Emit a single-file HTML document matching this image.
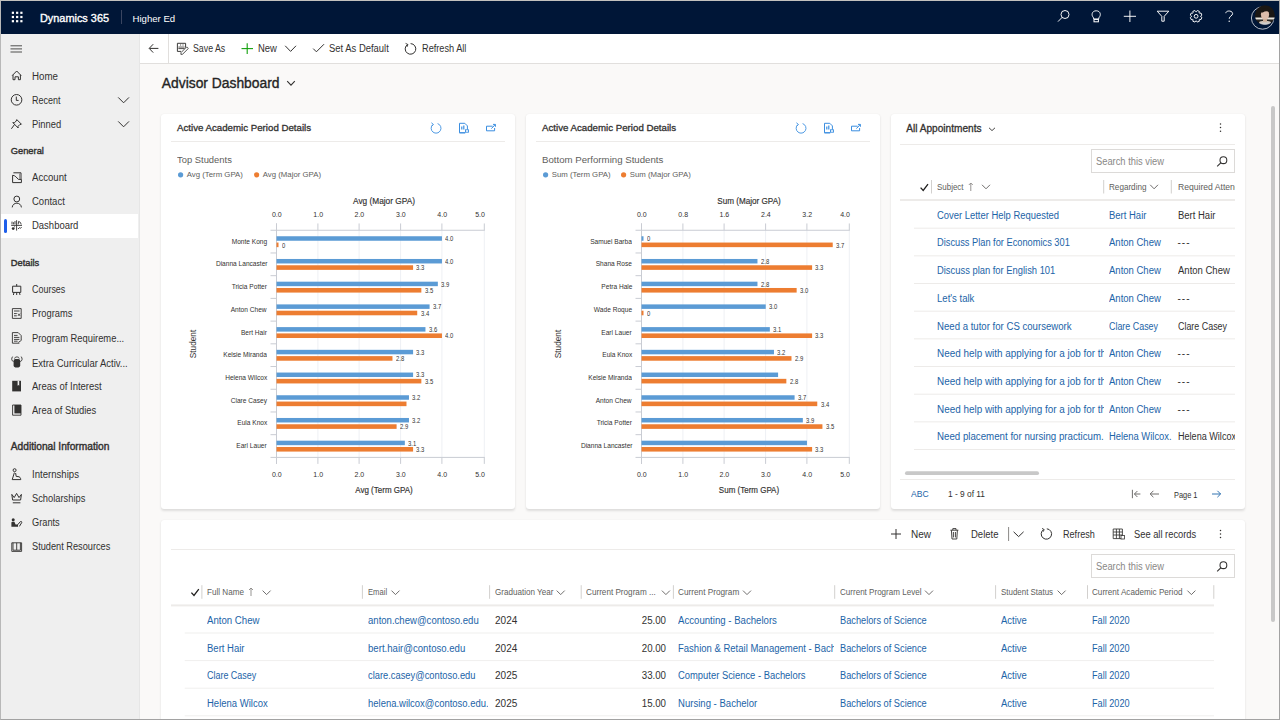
<!DOCTYPE html><html><head><meta charset="utf-8"><style>
html,body{margin:0;padding:0;}
body{width:1280px;height:720px;overflow:hidden;position:relative;background:#faf9f8;font-family:"Liberation Sans", sans-serif;}
.t{position:absolute;line-height:0;white-space:nowrap;}
.r{position:absolute;}
</style></head><body>
<div class="r" style="left:0px;top:0px;width:1280px;height:34px;background:#001637;"></div>
<svg class="r" style="left:0px;top:0px;" width="40" height="34" viewBox="0 0 40 34"><rect x="11.80" y="11.70" width="2.2" height="2.2" fill="#fff"/><rect x="11.80" y="15.90" width="2.2" height="2.2" fill="#fff"/><rect x="11.80" y="20.10" width="2.2" height="2.2" fill="#fff"/><rect x="16.05" y="11.70" width="2.2" height="2.2" fill="#fff"/><rect x="16.05" y="15.90" width="2.2" height="2.2" fill="#fff"/><rect x="16.05" y="20.10" width="2.2" height="2.2" fill="#fff"/><rect x="20.30" y="11.70" width="2.2" height="2.2" fill="#fff"/><rect x="20.30" y="15.90" width="2.2" height="2.2" fill="#fff"/><rect x="20.30" y="20.10" width="2.2" height="2.2" fill="#fff"/></svg>
<div class="t" style="top:18.42px;font-size:10.9px;color:#ffffff;left:40.00px;-webkit-text-stroke:0.35px #ffffff;">Dynamics 365</div>
<div class="r" style="left:121px;top:10px;width:1px;height:14px;background:#3a4560;"></div>
<div class="t" style="top:19.17px;font-size:9.6px;color:#ffffff;left:132.50px;">Higher Ed</div>
<svg class="r" style="left:0px;top:0px;" width="1280" height="34" viewBox="0 0 1280 34"><circle cx="1065" cy="14.5" r="4" fill="none" stroke="#fff" stroke-width="0.95"/><line x1="1062.2" y1="17.3" x2="1058" y2="21.6" stroke="#fff" stroke-width="0.95"/><path d="M1093.2 17.2 C1091.3 15.6 1091.6 10.8 1096.2 10.8 C1100.8 10.8 1101.1 15.6 1099.2 17.2 L1098.6 19 L1093.8 19 Z" fill="none" stroke="#fff" stroke-width="0.95"/><rect x="1094" y="19.4" width="4.4" height="2.4" fill="none" stroke="#fff" stroke-width="1"/><line x1="1123.8" y1="16.3" x2="1136" y2="16.3" stroke="#fff" stroke-width="0.95"/><line x1="1129.9" y1="10.5" x2="1129.9" y2="22" stroke="#fff" stroke-width="0.95"/><path d="M1157.2 11.2 L1168.8 11.2 L1164.2 16.3 L1164.2 21.2 L1161.8 21.2 L1161.8 16.3 Z" fill="none" stroke="#fff" stroke-width="0.95" stroke-linejoin="round"/><polygon points="1201.88,17.48 1201.02,19.56 1199.55,19.35 1199.15,19.75 1199.36,21.22 1197.28,22.08 1196.38,20.89 1195.82,20.89 1194.92,22.08 1192.84,21.22 1193.05,19.75 1192.65,19.35 1191.18,19.56 1190.32,17.48 1191.51,16.58 1191.51,16.02 1190.32,15.12 1191.18,13.04 1192.65,13.25 1193.05,12.85 1192.84,11.38 1194.92,10.52 1195.82,11.71 1196.38,11.71 1197.28,10.52 1199.36,11.38 1199.15,12.85 1199.55,13.25 1201.02,13.04 1201.88,15.12 1200.69,16.02 1200.69,16.58" fill="none" stroke="#fff" stroke-width="0.95" stroke-linejoin="round"/><circle cx="1196.1" cy="16.3" r="1.9" fill="none" stroke="#fff" stroke-width="0.95"/><path d="M1225.8 13.2 C1225.8 10.2 1232.6 10.2 1232.6 13.6 C1232.6 16 1229.2 16 1229.2 18.8" fill="none" stroke="#fff" stroke-width="0.95"/><circle cx="1229.2" cy="21.2" r="0.7" fill="#fff"/><circle cx="1262.6" cy="18" r="11.2" fill="none" stroke="#c8ccd6" stroke-width="0.9"/><defs><clipPath id="av"><circle cx="1264.9" cy="15.2" r="10"/></clipPath></defs><g clip-path="url(#av)"><rect x="1254" y="4" width="22" height="22" fill="#1b1714"/><rect x="1254" y="17.5" width="22" height="2.2" fill="#e8e4dc"/><rect x="1254" y="19.7" width="22" height="1.6" fill="#2a2622"/><ellipse cx="1265" cy="22.6" rx="6" ry="1.8" fill="#cfc6bd"/><rect x="1254" y="23.6" width="22" height="1.2" fill="#d8dbe4"/><rect x="1254" y="24.8" width="22" height="2" fill="#1a2440"/><ellipse cx="1265" cy="14.6" rx="4.1" ry="5.3" fill="#dcbcaa"/><path d="M1260.4 12.6 Q1262 7.6 1266.6 8 Q1269.8 8.6 1269.6 12 Q1266 10.4 1262.8 12.4 Z" fill="#1b1714"/><rect x="1263" y="19.2" width="4" height="2.6" fill="#cfae98"/></g></svg>
<div class="r" style="left:0;top:0;width:1280px;height:720px;box-sizing:border-box;border-top:1px solid #c2c1be;border-left:1px solid #b8b8b8;border-right:1px solid #a2a2a2;border-bottom:1px solid #a2a2a2;z-index:50;pointer-events:none"></div>
<div class="r" style="left:1px;top:34px;width:138px;height:686px;background:#efefef;"></div>
<div class="r" style="left:139px;top:34px;width:1px;height:686px;background:#e6e6e6;"></div>
<svg class="r" style="left:0px;top:0px;" width="140" height="720" viewBox="0 0 140 720"><line x1="10.5" y1="45.8" x2="22" y2="45.8" stroke="#323130" stroke-width="0.85"/><line x1="10.5" y1="48.9" x2="22" y2="48.9" stroke="#323130" stroke-width="0.85"/><line x1="10.5" y1="52" x2="22" y2="52" stroke="#323130" stroke-width="0.85"/><path d="M118.2 97.4 L123.6 102.8 L129 97.4" fill="none" stroke="#323130" stroke-width="1"/><path d="M118.2 121.4 L123.6 126.8 L129 121.4" fill="none" stroke="#323130" stroke-width="1"/></svg>
<div class="t" style="top:76.53px;font-size:10.0px;color:#323130;left:32.00px;transform:scaleX(0.9747);transform-origin:left center;">Home</div>
<div class="t" style="top:100.63px;font-size:10.0px;color:#323130;left:32.00px;transform:scaleX(0.8995);transform-origin:left center;">Recent</div>
<div class="t" style="top:124.53px;font-size:10.0px;color:#323130;left:32.00px;transform:scaleX(0.9377);transform-origin:left center;">Pinned</div>
<div class="t" style="top:151.28px;font-size:9.3px;color:#323130;left:10.80px;-webkit-text-stroke:0.4px #323130;">General</div>
<div class="r" style="left:1px;top:214px;width:137px;height:24px;background:#ffffff;"></div>
<div class="r" style="left:3.5px;top:218.5px;width:3px;height:14px;background:#1f5fea;border-radius:2px;"></div>
<div class="t" style="top:177.83px;font-size:10.0px;color:#323130;left:32.00px;transform:scaleX(0.9603);transform-origin:left center;">Account</div>
<div class="t" style="top:202.23px;font-size:10.0px;color:#323130;left:32.00px;transform:scaleX(0.9517);transform-origin:left center;">Contact</div>
<div class="t" style="top:226.13px;font-size:10.0px;color:#323130;left:32.00px;transform:scaleX(0.9484);transform-origin:left center;">Dashboard</div>
<div class="t" style="top:262.88px;font-size:9.3px;color:#323130;left:10.80px;-webkit-text-stroke:0.4px #323130;">Details</div>
<div class="t" style="top:290.33px;font-size:10.0px;color:#323130;left:32.00px;transform:scaleX(0.8943);transform-origin:left center;">Courses</div>
<div class="t" style="top:314.23px;font-size:10.0px;color:#323130;left:32.00px;transform:scaleX(0.9297);transform-origin:left center;">Programs</div>
<div class="t" style="top:338.83px;font-size:10.0px;color:#323130;left:32.00px;transform:scaleX(0.9373);transform-origin:left center;">Program Requireme...</div>
<div class="t" style="top:363.53px;font-size:10.0px;color:#323130;left:32.00px;transform:scaleX(0.948);transform-origin:left center;">Extra Curricular Activ...</div>
<div class="t" style="top:386.83px;font-size:10.0px;color:#323130;left:32.00px;transform:scaleX(0.95);transform-origin:left center;">Areas of Interest</div>
<div class="t" style="top:410.83px;font-size:10.0px;color:#323130;left:32.00px;transform:scaleX(0.9404);transform-origin:left center;">Area of Studies</div>
<div class="t" style="top:447.46px;font-size:10.2px;color:#323130;left:10.80px;-webkit-text-stroke:0.4px #323130;">Additional Information</div>
<div class="t" style="top:474.53px;font-size:10.0px;color:#323130;left:32.00px;transform:scaleX(0.9608);transform-origin:left center;">Internships</div>
<div class="t" style="top:498.53px;font-size:10.0px;color:#323130;left:32.00px;transform:scaleX(0.931);transform-origin:left center;">Scholarships</div>
<div class="t" style="top:522.83px;font-size:10.0px;color:#323130;left:32.00px;transform:scaleX(0.923);transform-origin:left center;">Grants</div>
<div class="t" style="top:546.83px;font-size:10.0px;color:#323130;left:32.00px;transform:scaleX(0.9206);transform-origin:left center;">Student Resources</div>
<svg class="r" style="left:0px;top:0px;" width="140" height="720" viewBox="0 0 140 720"><path d="M12.2 75.6 L16.7 71 L21.2 75.6 M13 74.8 L13 79.7 L15 79.7 L15 76.8 L18.4 76.8 L18.4 79.7 L20.4 79.7 L20.4 74.8" fill="none" stroke="#323130" stroke-width="1" stroke-linejoin="round"/><circle cx="16.55" cy="99.8" r="5.3" fill="none" stroke="#323130" stroke-width="1"/><path d="M16.3 96.6 L16.3 100.4 L18.6 100.4" fill="none" stroke="#323130" stroke-width="1"/><path d="M16.8 119.6 L21.4 124.2 L19.8 124.6 L18 126.4 L18.2 128 L12.8 122.6 L14.4 122.8 L16.2 121 Z M14.6 124.4 L11.4 128.8" fill="none" stroke="#323130" stroke-width="1" stroke-linejoin="round"/><path d="M12.6 182.6 L12.6 175.2 M13.4 172.8 L21 172.8 L21 179.4 M12.8 175.3 C15.2 175.4 16.6 177.6 18.4 179.4 L21.4 179.4 L21.4 182.6 L12.6 182.6" fill="none" stroke="#323130" stroke-width="1"/><path d="M19.6 173.6 L19.6 178.8" stroke="#323130" stroke-width="0.7" opacity="0.7"/><circle cx="16.8" cy="199" r="2.9" fill="none" stroke="#323130" stroke-width="1"/><path d="M12.2 207.4 C12.6 201.8 21 201.8 21.4 207.4" fill="none" stroke="#323130" stroke-width="1"/><path d="M16.6 220.2 L16.6 230.6 M11.2 225.4 L22 225.4 M12 221.6 L12 224.4 M13.6 222.2 L13.6 224.4 M15 221 L15 224.4 M18.2 224.4 L18.6 221.4 L20.4 222.4 L21.2 224.4 M18 229 L19.4 227.6 L20.4 228.4 L21.6 227" fill="none" stroke="#323130" stroke-width="0.9"/><circle cx="13.2" cy="228.6" r="1.4" fill="#323130"/><circle cx="14.6" cy="226.8" r="0.5" fill="#323130"/><path d="M12.6 286.2 L20.8 286.2 L20.8 292.4 L12.6 292.4 Z M16.7 284 L16.7 286.2 M14 292.4 L13.4 295 M16.7 292.4 L16.7 295 M19.4 292.4 L20 295" fill="none" stroke="#323130" stroke-width="1"/><path d="M12.4 308.6 L21.2 308.6 L21.2 318.4 L12.4 318.4 Z M14 311 L19.6 311 M14 313.6 L16.8 313.6 M14 315.8 L16.8 315.8 M18 313.6 L20 315.8 M20 313.6 L18 315.8" fill="none" stroke="#323130" stroke-width="0.9"/><path d="M12.4 332.6 L18.2 332.6 L21.2 335.6 L21.2 340 M19.4 343.2 L12.4 343.2 L12.4 332.6 M14 335.4 L17.6 335.4 M14 337.4 L19.4 337.4 M14 339.4 L19.4 339.4 M14 341.2 L17.6 341.2 M18.4 342.4 L21.6 340.2" fill="none" stroke="#323130" stroke-width="0.9"/><rect x="13.6" y="359" width="6.6" height="8.4" rx="1.8" fill="#323130"/><path d="M13.6 361.6 C11.4 361 11.2 358.4 12.6 356.6 M20.2 361.6 C22.4 361 22.6 358.4 21.2 356.6 M14.6 358.6 C14.6 356.4 19.2 356.4 19.2 358.6" fill="none" stroke="#323130" stroke-width="0.9"/><rect x="12.2" y="380.8" width="8.8" height="10.6" fill="#323130"/><path d="M17.6 380.8 L19.2 380.8 L19.2 385.8 L18.4 385 L17.6 385.8 Z" fill="#efefef"/><path d="M12.6 405 L12.6 415.2 L21 415.2 L21 405 Z" fill="none" stroke="#323130" stroke-width="0.9"/><rect x="14.4" y="405" width="6.6" height="8.4" fill="#323130"/><circle cx="14.6" cy="470.2" r="1.5" fill="none" stroke="#323130" stroke-width="1"/><path d="M14.4 472.6 L12.2 479.6 L20.8 479.6 C20.6 477.6 19.6 476.6 18 476.6 L16.2 476.4 L15.6 473" fill="none" stroke="#323130" stroke-width="1" stroke-linejoin="round"/><path d="M11.8 494.4 L14.2 497.6 L16.6 493.4 L19 497.6 L21.4 494.4 L20.6 500 L12.6 500 Z M12.8 502.8 L20.4 502.8" fill="none" stroke="#323130" stroke-width="1" stroke-linejoin="round"/><circle cx="13.2" cy="519.8" r="1.5" fill="#323130"/><path d="M11.4 526.8 L11.4 523 C11.4 522 12 521.8 13 521.8 L14.4 521.8 L15.6 524.4 L18 524.4 L18 526.8 Z" fill="#323130"/><path d="M17.6 524.8 L20.4 521.6 C21.4 521 22.2 522 21.6 522.8 L19.4 526.4" fill="none" stroke="#323130" stroke-width="1"/><path d="M11.8 542.8 L21.6 542.8 L21.6 551.4 L11.8 551.4 Z M13 542.8 L13 550.2 L16.7 550.2 L16.7 542.8 M20.4 542.8 L20.4 550.2 L16.7 550.2" fill="none" stroke="#323130" stroke-width="0.9"/></svg>
<div class="r" style="left:140px;top:34px;width:1140px;height:29px;background:#ffffff;"></div>
<div class="r" style="left:140px;top:63px;width:1140px;height:1px;background:#e1dfdd;"></div>
<div class="r" style="left:168px;top:34px;width:1px;height:29px;background:#e1dfdd;"></div>
<svg class="r" style="left:0px;top:0px;" width="480" height="64" viewBox="0 0 480 64"><path d="M149.5 48.4 L158.4 48.4 M153.2 44.2 L149.2 48.4 L153.2 52.6" fill="none" stroke="#323130" stroke-width="1"/><path d="M181 51.4 L177.4 51.4 L177.4 43.3 L185.6 43.3 L185.6 47.6" fill="none" stroke="#323130" stroke-width="0.95"/><rect x="178.4" y="46.2" width="6.2" height="2.3" fill="#a6a4a2"/><path d="M178.4 48.6 L184.6 48.6" stroke="#323130" stroke-width="0.8"/><path d="M180.6 43.5 L180.6 46 M183 43.5 L183 46" stroke="#605e5c" stroke-width="0.6"/><path d="M181 52.6 L186.7 46.9 L188.3 48.5 L182.6 54.2 L180.9 54.4 Z" fill="#fff" stroke="#323130" stroke-width="0.85" stroke-linejoin="round"/><line x1="241.5" y1="48.6" x2="253" y2="48.6" stroke="#13a10e" stroke-width="1.1"/><line x1="247.2" y1="43.2" x2="247.2" y2="54" stroke="#13a10e" stroke-width="1.1"/><path d="M285.2 45.8 L290.6 51.4 L296 45.8" fill="none" stroke="#323130" stroke-width="1"/><path d="M313.2 48.6 L316.4 51.8 L324 44.2" fill="none" stroke="#323130" stroke-width="1"/><path d="M407.4 44.6 A5.3 5.3 0 1 0 410.6 43.6" fill="none" stroke="#323130" stroke-width="1"/><path d="M405.6 43.4 L408 44.6 L406.8 47" fill="none" stroke="#323130" stroke-width="0.9"/></svg>
<div class="t" style="top:48.83px;font-size:10px;color:#323130;left:192.70px;transform:scaleX(0.879);transform-origin:left center;">Save As</div>
<div class="t" style="top:48.83px;font-size:10px;color:#323130;left:257.80px;transform:scaleX(0.9447);transform-origin:left center;">New</div>
<div class="t" style="top:48.83px;font-size:10px;color:#323130;left:328.90px;transform:scaleX(0.9437);transform-origin:left center;">Set As Default</div>
<div class="t" style="top:48.83px;font-size:10px;color:#323130;left:421.60px;transform:scaleX(0.9182);transform-origin:left center;">Refresh All</div>
<div class="t" style="top:82.50px;font-size:13.85px;color:#242424;left:161.80px;-webkit-text-stroke:0.35px #242424;">Advisor Dashboard</div>
<svg class="r" style="left:0px;top:0px;" width="300" height="100" viewBox="0 0 300 100"><path d="M287.2 81.2 L291 85.2 L294.8 81.2" fill="none" stroke="#323130" stroke-width="1.1"/></svg>
<div class="r" style="left:1271px;top:106px;width:4px;height:516px;background:#c8c8c8;border-radius:2px;"></div>
<div class="r" style="left:161px;top:114px;width:354px;height:395px;background:#ffffff;box-shadow:0 1.2px 2.4px rgba(0,0,0,0.11),0 0 1px rgba(0,0,0,0.06);border-radius:3px;"></div>
<div class="r" style="left:526px;top:114px;width:354px;height:395px;background:#ffffff;box-shadow:0 1.2px 2.4px rgba(0,0,0,0.11),0 0 1px rgba(0,0,0,0.06);border-radius:3px;"></div>
<div class="r" style="left:891px;top:114px;width:354px;height:395px;background:#ffffff;box-shadow:0 1.2px 2.4px rgba(0,0,0,0.11),0 0 1px rgba(0,0,0,0.06);border-radius:3px;"></div>
<div class="r" style="left:161px;top:520px;width:1084px;height:210px;background:#ffffff;box-shadow:0 1.2px 2.4px rgba(0,0,0,0.11),0 0 1px rgba(0,0,0,0.06);border-radius:3px;"></div>
<div class="t" style="top:127.74px;font-size:9.7px;color:#323130;left:177.00px;-webkit-text-stroke:0.3px #323130;">Active Academic Period Details</div>
<div class="r" style="left:171px;top:141px;width:334px;height:1px;background:#edebe9;"></div>
<svg class="r" style="left:0px;top:0px;" width="1280" height="150" viewBox="0 0 1280 150"><path d="M432.8 124.6 A4.9 4.9 0 1 0 437.6 123.6" fill="none" stroke="#3b8ee0" stroke-width="0.9"/><path d="M431.4 122.8 L433.4 124.4 L431.6 126.4" fill="none" stroke="#3b8ee0" stroke-width="0.9"/><path d="M459.5 123.3 L464.8 123.3 L467.4 125.9 L467.4 129.6 M465.2 132.8 L459.5 132.8 Z M459.5 123.3 L459.5 132.8" fill="none" stroke="#3b8ee0" stroke-width="1"/><rect x="461.2" y="126.5" width="1.2" height="3" fill="#3b8ee0"/><rect x="463.2" y="125.5" width="1.2" height="4" fill="#3b8ee0"/><rect x="465.5" y="129.8" width="3" height="2.4" fill="none" stroke="#3b8ee0" stroke-width="0.9"/><path d="M492.6 126.2 L486.5 126.2 L486.5 130.8 L494.6 130.8 L494.6 128 M491.4 128.6 L495.2 124.6 M493 124.4 L495.4 124.4 L495.4 126.8" fill="none" stroke="#3b8ee0" stroke-width="1"/></svg>
<div class="t" style="top:159.94px;font-size:9.7px;color:#605e5c;left:177.00px;transform:scaleX(0.9696);transform-origin:left center;">Top Students</div>
<div class="t" style="top:174.90px;font-size:7.8px;color:#605e5c;left:186.80px;">Avg (Term GPA)</div>
<svg class="r" style="left:0px;top:0px;" width="1280" height="200" viewBox="0 0 1280 200"><circle cx="180.6" cy="174.8" r="2.6" fill="#5b9bd5"/></svg>
<svg class="r" style="left:0px;top:0px;" width="1280" height="200" viewBox="0 0 1280 200"><circle cx="256.6" cy="174.8" r="2.6" fill="#ed7d31"/></svg>
<div class="t" style="top:174.90px;font-size:7.8px;color:#605e5c;left:262.80px;">Avg (Major GPA)</div>
<svg class="r" style="left:0px;top:0px;" width="1280" height="520" viewBox="0 0 1280 520"><line x1="317.90" y1="230.25" x2="317.90" y2="457.4" stroke="#eef0f4" stroke-width="1"/><line x1="359.10" y1="230.25" x2="359.10" y2="457.4" stroke="#eef0f4" stroke-width="1"/><line x1="400.60" y1="230.25" x2="400.60" y2="457.4" stroke="#eef0f4" stroke-width="1"/><line x1="441.90" y1="230.25" x2="441.90" y2="457.4" stroke="#eef0f4" stroke-width="1"/><line x1="484.30" y1="230.25" x2="484.30" y2="457.4" stroke="#eef0f4" stroke-width="1"/><line x1="270.5" y1="230.25" x2="484.8" y2="230.25" stroke="#c9ccd3" stroke-width="1"/><line x1="270.5" y1="457.4" x2="484.8" y2="457.4" stroke="#c9ccd3" stroke-width="1"/><line x1="276.5" y1="223.45" x2="276.5" y2="463.9" stroke="#c9ccd3" stroke-width="1"/><line x1="276.50" y1="223.45" x2="276.50" y2="230.25" stroke="#c9ccd3" stroke-width="1"/><line x1="276.50" y1="457.4" x2="276.50" y2="463.9" stroke="#c9ccd3" stroke-width="1"/><line x1="317.90" y1="223.45" x2="317.90" y2="230.25" stroke="#c9ccd3" stroke-width="1"/><line x1="317.90" y1="457.4" x2="317.90" y2="463.9" stroke="#c9ccd3" stroke-width="1"/><line x1="359.10" y1="223.45" x2="359.10" y2="230.25" stroke="#c9ccd3" stroke-width="1"/><line x1="359.10" y1="457.4" x2="359.10" y2="463.9" stroke="#c9ccd3" stroke-width="1"/><line x1="400.60" y1="223.45" x2="400.60" y2="230.25" stroke="#c9ccd3" stroke-width="1"/><line x1="400.60" y1="457.4" x2="400.60" y2="463.9" stroke="#c9ccd3" stroke-width="1"/><line x1="441.90" y1="223.45" x2="441.90" y2="230.25" stroke="#c9ccd3" stroke-width="1"/><line x1="441.90" y1="457.4" x2="441.90" y2="463.9" stroke="#c9ccd3" stroke-width="1"/><line x1="484.30" y1="223.45" x2="484.30" y2="230.25" stroke="#c9ccd3" stroke-width="1"/><line x1="484.30" y1="457.4" x2="484.30" y2="463.9" stroke="#c9ccd3" stroke-width="1"/><line x1="270.5" y1="252.97" x2="276.5" y2="252.97" stroke="#c9ccd3" stroke-width="1"/><line x1="270.5" y1="275.68" x2="276.5" y2="275.68" stroke="#c9ccd3" stroke-width="1"/><line x1="270.5" y1="298.39" x2="276.5" y2="298.39" stroke="#c9ccd3" stroke-width="1"/><line x1="270.5" y1="321.11" x2="276.5" y2="321.11" stroke="#c9ccd3" stroke-width="1"/><line x1="270.5" y1="343.82" x2="276.5" y2="343.82" stroke="#c9ccd3" stroke-width="1"/><line x1="270.5" y1="366.54" x2="276.5" y2="366.54" stroke="#c9ccd3" stroke-width="1"/><line x1="270.5" y1="389.25" x2="276.5" y2="389.25" stroke="#c9ccd3" stroke-width="1"/><line x1="270.5" y1="411.97" x2="276.5" y2="411.97" stroke="#c9ccd3" stroke-width="1"/><line x1="270.5" y1="434.68" x2="276.5" y2="434.68" stroke="#c9ccd3" stroke-width="1"/><rect x="276.5" y="236.25" width="165.46" height="4.5" fill="#5b9bd5"/><rect x="276.5" y="242.55" width="2.00" height="4.6" fill="#ed7d31"/><rect x="276.5" y="258.97" width="165.46" height="4.5" fill="#5b9bd5"/><rect x="276.5" y="265.26" width="136.59" height="4.6" fill="#ed7d31"/><rect x="276.5" y="281.68" width="161.34" height="4.5" fill="#5b9bd5"/><rect x="276.5" y="287.98" width="144.84" height="4.6" fill="#ed7d31"/><rect x="276.5" y="304.39" width="153.09" height="4.5" fill="#5b9bd5"/><rect x="276.5" y="310.69" width="140.72" height="4.6" fill="#ed7d31"/><rect x="276.5" y="327.11" width="148.96" height="4.5" fill="#5b9bd5"/><rect x="276.5" y="333.41" width="165.46" height="4.6" fill="#ed7d31"/><rect x="276.5" y="349.82" width="136.59" height="4.5" fill="#5b9bd5"/><rect x="276.5" y="356.12" width="115.97" height="4.6" fill="#ed7d31"/><rect x="276.5" y="372.54" width="136.59" height="4.5" fill="#5b9bd5"/><rect x="276.5" y="378.84" width="144.84" height="4.6" fill="#ed7d31"/><rect x="276.5" y="395.25" width="132.47" height="4.5" fill="#5b9bd5"/><rect x="276.5" y="401.56" width="129.99" height="4.6" fill="#ed7d31"/><rect x="276.5" y="417.97" width="132.47" height="4.5" fill="#5b9bd5"/><rect x="276.5" y="424.27" width="120.10" height="4.6" fill="#ed7d31"/><rect x="276.5" y="440.68" width="128.34" height="4.5" fill="#5b9bd5"/><rect x="276.5" y="446.98" width="136.59" height="4.6" fill="#ed7d31"/></svg>
<div class="t" style="top:241.65px;font-size:7.097px;color:#323130;right:1013.00px;text-align:right;transform:scaleX(0.93);transform-origin:right center;">Monte Kong</div>
<div class="t" style="top:239.18px;font-size:6.705px;color:#323130;left:445.26px;transform:scaleX(0.88);transform-origin:left center;">4.0</div>
<div class="t" style="top:245.53px;font-size:6.705px;color:#323130;left:281.80px;transform:scaleX(0.88);transform-origin:left center;">0</div>
<div class="t" style="top:264.36px;font-size:7.097px;color:#323130;right:1013.00px;text-align:right;transform:scaleX(0.93);transform-origin:right center;">Dianna Lancaster</div>
<div class="t" style="top:261.89px;font-size:6.705px;color:#323130;left:445.26px;transform:scaleX(0.88);transform-origin:left center;">4.0</div>
<div class="t" style="top:268.24px;font-size:6.705px;color:#323130;left:416.39px;transform:scaleX(0.88);transform-origin:left center;">3.3</div>
<div class="t" style="top:287.08px;font-size:7.097px;color:#323130;right:1013.00px;text-align:right;transform:scaleX(0.93);transform-origin:right center;">Tricia Potter</div>
<div class="t" style="top:284.61px;font-size:6.705px;color:#323130;left:441.14px;transform:scaleX(0.88);transform-origin:left center;">3.9</div>
<div class="t" style="top:290.96px;font-size:6.705px;color:#323130;left:424.64px;transform:scaleX(0.88);transform-origin:left center;">3.5</div>
<div class="t" style="top:309.79px;font-size:7.097px;color:#323130;right:1013.00px;text-align:right;transform:scaleX(0.93);transform-origin:right center;">Anton Chew</div>
<div class="t" style="top:307.32px;font-size:6.705px;color:#323130;left:432.89px;transform:scaleX(0.88);transform-origin:left center;">3.7</div>
<div class="t" style="top:313.67px;font-size:6.705px;color:#323130;left:420.52px;transform:scaleX(0.88);transform-origin:left center;">3.4</div>
<div class="t" style="top:332.51px;font-size:7.097px;color:#323130;right:1013.00px;text-align:right;transform:scaleX(0.93);transform-origin:right center;">Bert Hair</div>
<div class="t" style="top:330.04px;font-size:6.705px;color:#323130;left:428.76px;transform:scaleX(0.88);transform-origin:left center;">3.6</div>
<div class="t" style="top:336.39px;font-size:6.705px;color:#323130;left:445.26px;transform:scaleX(0.88);transform-origin:left center;">4.0</div>
<div class="t" style="top:355.22px;font-size:7.097px;color:#323130;right:1013.00px;text-align:right;transform:scaleX(0.93);transform-origin:right center;">Kelsie Miranda</div>
<div class="t" style="top:352.75px;font-size:6.705px;color:#323130;left:416.39px;transform:scaleX(0.88);transform-origin:left center;">3.3</div>
<div class="t" style="top:359.10px;font-size:6.705px;color:#323130;left:395.77px;transform:scaleX(0.88);transform-origin:left center;">2.8</div>
<div class="t" style="top:377.94px;font-size:7.097px;color:#323130;right:1013.00px;text-align:right;transform:scaleX(0.93);transform-origin:right center;">Helena Wilcox</div>
<div class="t" style="top:375.47px;font-size:6.705px;color:#323130;left:416.39px;transform:scaleX(0.88);transform-origin:left center;">3.3</div>
<div class="t" style="top:381.82px;font-size:6.705px;color:#323130;left:424.64px;transform:scaleX(0.88);transform-origin:left center;">3.5</div>
<div class="t" style="top:400.65px;font-size:7.097px;color:#323130;right:1013.00px;text-align:right;transform:scaleX(0.93);transform-origin:right center;">Clare Casey</div>
<div class="t" style="top:398.18px;font-size:6.705px;color:#323130;left:412.27px;transform:scaleX(0.88);transform-origin:left center;">3.2</div>
<div class="t" style="top:423.37px;font-size:7.097px;color:#323130;right:1013.00px;text-align:right;transform:scaleX(0.93);transform-origin:right center;">Eula Knox</div>
<div class="t" style="top:420.90px;font-size:6.705px;color:#323130;left:412.27px;transform:scaleX(0.88);transform-origin:left center;">3.2</div>
<div class="t" style="top:427.25px;font-size:6.705px;color:#323130;left:399.90px;transform:scaleX(0.88);transform-origin:left center;">2.9</div>
<div class="t" style="top:446.08px;font-size:7.097px;color:#323130;right:1013.00px;text-align:right;transform:scaleX(0.93);transform-origin:right center;">Earl Lauer</div>
<div class="t" style="top:443.61px;font-size:6.705px;color:#323130;left:408.14px;transform:scaleX(0.88);transform-origin:left center;">3.1</div>
<div class="t" style="top:449.96px;font-size:6.705px;color:#323130;left:416.39px;transform:scaleX(0.88);transform-origin:left center;">3.3</div>
<div class="t" style="top:214.87px;font-size:7.0px;color:#323130;left:76.80px;width:400px;text-align:center;">0.0</div>
<div class="t" style="top:474.87px;font-size:7.0px;color:#323130;left:76.80px;width:400px;text-align:center;">0.0</div>
<div class="t" style="top:214.87px;font-size:7.0px;color:#323130;left:118.20px;width:400px;text-align:center;">1.0</div>
<div class="t" style="top:474.87px;font-size:7.0px;color:#323130;left:118.20px;width:400px;text-align:center;">1.0</div>
<div class="t" style="top:214.87px;font-size:7.0px;color:#323130;left:159.40px;width:400px;text-align:center;">2.0</div>
<div class="t" style="top:474.87px;font-size:7.0px;color:#323130;left:159.40px;width:400px;text-align:center;">2.0</div>
<div class="t" style="top:214.87px;font-size:7.0px;color:#323130;left:200.90px;width:400px;text-align:center;">3.0</div>
<div class="t" style="top:474.87px;font-size:7.0px;color:#323130;left:200.90px;width:400px;text-align:center;">3.0</div>
<div class="t" style="top:214.87px;font-size:7.0px;color:#323130;left:242.20px;width:400px;text-align:center;">4.0</div>
<div class="t" style="top:474.87px;font-size:7.0px;color:#323130;left:242.20px;width:400px;text-align:center;">4.0</div>
<div class="t" style="top:214.87px;font-size:7.0px;color:#323130;left:280.00px;width:400px;text-align:center;">5.0</div>
<div class="t" style="top:474.87px;font-size:7.0px;color:#323130;left:280.00px;width:400px;text-align:center;">5.0</div>
<div class="t" style="top:200.71px;font-size:8.35px;color:#323130;left:184.30px;width:400px;text-align:center;transform:scaleX(0.9946);transform-origin:center center;-webkit-text-stroke:0.15px #323130;">Avg (Major GPA)</div>
<div class="t" style="top:489.71px;font-size:8.35px;color:#323130;left:184.30px;width:400px;text-align:center;transform:scaleX(0.9582);transform-origin:center center;-webkit-text-stroke:0.15px #323130;">Avg (Term GPA)</div>
<div class="t" style="left:173.3px;top:343.6px;width:40px;text-align:center;font-size:8.3px;color:#323130;transform:rotate(-90deg);">Student</div>
<div class="t" style="top:127.74px;font-size:9.7px;color:#323130;left:542.00px;-webkit-text-stroke:0.3px #323130;">Active Academic Period Details</div>
<div class="r" style="left:536px;top:141px;width:334px;height:1px;background:#edebe9;"></div>
<svg class="r" style="left:0px;top:0px;" width="1280" height="150" viewBox="0 0 1280 150"><path d="M797.8 124.6 A4.9 4.9 0 1 0 802.6 123.6" fill="none" stroke="#3b8ee0" stroke-width="0.9"/><path d="M796.4 122.8 L798.4 124.4 L796.6 126.4" fill="none" stroke="#3b8ee0" stroke-width="0.9"/><path d="M824.5 123.3 L829.8 123.3 L832.4 125.9 L832.4 129.6 M830.2 132.8 L824.5 132.8 Z M824.5 123.3 L824.5 132.8" fill="none" stroke="#3b8ee0" stroke-width="1"/><rect x="826.2" y="126.5" width="1.2" height="3" fill="#3b8ee0"/><rect x="828.2" y="125.5" width="1.2" height="4" fill="#3b8ee0"/><rect x="830.5" y="129.8" width="3" height="2.4" fill="none" stroke="#3b8ee0" stroke-width="0.9"/><path d="M857.6 126.2 L851.5 126.2 L851.5 130.8 L859.6 130.8 L859.6 128 M856.4 128.6 L860.2 124.6 M858 124.4 L860.4 124.4 L860.4 126.8" fill="none" stroke="#3b8ee0" stroke-width="1"/></svg>
<div class="t" style="top:159.94px;font-size:9.7px;color:#605e5c;left:542.00px;transform:scaleX(0.9971);transform-origin:left center;">Bottom Performing Students</div>
<div class="t" style="top:174.90px;font-size:7.8px;color:#605e5c;left:551.80px;">Sum (Term GPA)</div>
<svg class="r" style="left:0px;top:0px;" width="1280" height="200" viewBox="0 0 1280 200"><circle cx="545.6" cy="174.8" r="2.6" fill="#5b9bd5"/></svg>
<svg class="r" style="left:0px;top:0px;" width="1280" height="200" viewBox="0 0 1280 200"><circle cx="623.5999999999999" cy="174.8" r="2.6" fill="#ed7d31"/></svg>
<div class="t" style="top:174.90px;font-size:7.8px;color:#605e5c;left:629.80px;">Sum (Major GPA)</div>
<svg class="r" style="left:0px;top:0px;" width="1280" height="520" viewBox="0 0 1280 520"><line x1="682.90" y1="230.25" x2="682.90" y2="457.4" stroke="#eef0f4" stroke-width="1"/><line x1="724.10" y1="230.25" x2="724.10" y2="457.4" stroke="#eef0f4" stroke-width="1"/><line x1="765.60" y1="230.25" x2="765.60" y2="457.4" stroke="#eef0f4" stroke-width="1"/><line x1="806.90" y1="230.25" x2="806.90" y2="457.4" stroke="#eef0f4" stroke-width="1"/><line x1="849.30" y1="230.25" x2="849.30" y2="457.4" stroke="#eef0f4" stroke-width="1"/><line x1="635.5" y1="230.25" x2="849.8" y2="230.25" stroke="#c9ccd3" stroke-width="1"/><line x1="635.5" y1="457.4" x2="849.8" y2="457.4" stroke="#c9ccd3" stroke-width="1"/><line x1="641.5" y1="223.45" x2="641.5" y2="463.9" stroke="#c9ccd3" stroke-width="1"/><line x1="641.50" y1="223.45" x2="641.50" y2="230.25" stroke="#c9ccd3" stroke-width="1"/><line x1="641.50" y1="457.4" x2="641.50" y2="463.9" stroke="#c9ccd3" stroke-width="1"/><line x1="682.90" y1="223.45" x2="682.90" y2="230.25" stroke="#c9ccd3" stroke-width="1"/><line x1="682.90" y1="457.4" x2="682.90" y2="463.9" stroke="#c9ccd3" stroke-width="1"/><line x1="724.10" y1="223.45" x2="724.10" y2="230.25" stroke="#c9ccd3" stroke-width="1"/><line x1="724.10" y1="457.4" x2="724.10" y2="463.9" stroke="#c9ccd3" stroke-width="1"/><line x1="765.60" y1="223.45" x2="765.60" y2="230.25" stroke="#c9ccd3" stroke-width="1"/><line x1="765.60" y1="457.4" x2="765.60" y2="463.9" stroke="#c9ccd3" stroke-width="1"/><line x1="806.90" y1="223.45" x2="806.90" y2="230.25" stroke="#c9ccd3" stroke-width="1"/><line x1="806.90" y1="457.4" x2="806.90" y2="463.9" stroke="#c9ccd3" stroke-width="1"/><line x1="849.30" y1="223.45" x2="849.30" y2="230.25" stroke="#c9ccd3" stroke-width="1"/><line x1="849.30" y1="457.4" x2="849.30" y2="463.9" stroke="#c9ccd3" stroke-width="1"/><line x1="635.5" y1="252.97" x2="641.5" y2="252.97" stroke="#c9ccd3" stroke-width="1"/><line x1="635.5" y1="275.68" x2="641.5" y2="275.68" stroke="#c9ccd3" stroke-width="1"/><line x1="635.5" y1="298.39" x2="641.5" y2="298.39" stroke="#c9ccd3" stroke-width="1"/><line x1="635.5" y1="321.11" x2="641.5" y2="321.11" stroke="#c9ccd3" stroke-width="1"/><line x1="635.5" y1="343.82" x2="641.5" y2="343.82" stroke="#c9ccd3" stroke-width="1"/><line x1="635.5" y1="366.54" x2="641.5" y2="366.54" stroke="#c9ccd3" stroke-width="1"/><line x1="635.5" y1="389.25" x2="641.5" y2="389.25" stroke="#c9ccd3" stroke-width="1"/><line x1="635.5" y1="411.97" x2="641.5" y2="411.97" stroke="#c9ccd3" stroke-width="1"/><line x1="635.5" y1="434.68" x2="641.5" y2="434.68" stroke="#c9ccd3" stroke-width="1"/><rect x="641.5" y="236.25" width="2.00" height="4.5" fill="#5b9bd5"/><rect x="641.5" y="242.55" width="191.23" height="4.6" fill="#ed7d31"/><rect x="641.5" y="258.97" width="115.97" height="4.5" fill="#5b9bd5"/><rect x="641.5" y="265.26" width="170.61" height="4.6" fill="#ed7d31"/><rect x="641.5" y="281.68" width="115.97" height="4.5" fill="#5b9bd5"/><rect x="641.5" y="287.98" width="155.15" height="4.6" fill="#ed7d31"/><rect x="641.5" y="304.39" width="124.22" height="4.5" fill="#5b9bd5"/><rect x="641.5" y="310.69" width="2.00" height="4.6" fill="#ed7d31"/><rect x="641.5" y="327.11" width="128.34" height="4.5" fill="#5b9bd5"/><rect x="641.5" y="333.41" width="170.61" height="4.6" fill="#ed7d31"/><rect x="641.5" y="349.82" width="132.47" height="4.5" fill="#5b9bd5"/><rect x="641.5" y="356.12" width="149.99" height="4.6" fill="#ed7d31"/><rect x="641.5" y="372.54" width="136.59" height="4.5" fill="#5b9bd5"/><rect x="641.5" y="378.84" width="144.84" height="4.6" fill="#ed7d31"/><rect x="641.5" y="395.25" width="153.09" height="4.5" fill="#5b9bd5"/><rect x="641.5" y="401.56" width="175.77" height="4.6" fill="#ed7d31"/><rect x="641.5" y="417.97" width="161.34" height="4.5" fill="#5b9bd5"/><rect x="641.5" y="424.27" width="180.92" height="4.6" fill="#ed7d31"/><rect x="641.5" y="440.68" width="165.46" height="4.5" fill="#5b9bd5"/><rect x="641.5" y="446.98" width="170.61" height="4.6" fill="#ed7d31"/></svg>
<div class="t" style="top:241.65px;font-size:7.097px;color:#323130;right:648.00px;text-align:right;transform:scaleX(0.93);transform-origin:right center;">Samuel Barba</div>
<div class="t" style="top:239.18px;font-size:6.705px;color:#323130;left:646.80px;transform:scaleX(0.88);transform-origin:left center;">0</div>
<div class="t" style="top:245.53px;font-size:6.705px;color:#323130;left:836.03px;transform:scaleX(0.88);transform-origin:left center;">3.7</div>
<div class="t" style="top:264.36px;font-size:7.097px;color:#323130;right:648.00px;text-align:right;transform:scaleX(0.93);transform-origin:right center;">Shana Rose</div>
<div class="t" style="top:261.89px;font-size:6.705px;color:#323130;left:760.77px;transform:scaleX(0.88);transform-origin:left center;">2.8</div>
<div class="t" style="top:268.24px;font-size:6.705px;color:#323130;left:815.41px;transform:scaleX(0.88);transform-origin:left center;">3.3</div>
<div class="t" style="top:287.08px;font-size:7.097px;color:#323130;right:648.00px;text-align:right;transform:scaleX(0.93);transform-origin:right center;">Petra Hale</div>
<div class="t" style="top:284.61px;font-size:6.705px;color:#323130;left:760.77px;transform:scaleX(0.88);transform-origin:left center;">2.8</div>
<div class="t" style="top:290.96px;font-size:6.705px;color:#323130;left:799.95px;transform:scaleX(0.88);transform-origin:left center;">3.0</div>
<div class="t" style="top:309.79px;font-size:7.097px;color:#323130;right:648.00px;text-align:right;transform:scaleX(0.93);transform-origin:right center;">Wade Roque</div>
<div class="t" style="top:307.32px;font-size:6.705px;color:#323130;left:769.02px;transform:scaleX(0.88);transform-origin:left center;">3.0</div>
<div class="t" style="top:313.67px;font-size:6.705px;color:#323130;left:646.80px;transform:scaleX(0.88);transform-origin:left center;">0</div>
<div class="t" style="top:332.51px;font-size:7.097px;color:#323130;right:648.00px;text-align:right;transform:scaleX(0.93);transform-origin:right center;">Earl Lauer</div>
<div class="t" style="top:330.04px;font-size:6.705px;color:#323130;left:773.14px;transform:scaleX(0.88);transform-origin:left center;">3.1</div>
<div class="t" style="top:336.39px;font-size:6.705px;color:#323130;left:815.41px;transform:scaleX(0.88);transform-origin:left center;">3.3</div>
<div class="t" style="top:355.22px;font-size:7.097px;color:#323130;right:648.00px;text-align:right;transform:scaleX(0.93);transform-origin:right center;">Eula Knox</div>
<div class="t" style="top:352.75px;font-size:6.705px;color:#323130;left:777.27px;transform:scaleX(0.88);transform-origin:left center;">3.2</div>
<div class="t" style="top:359.10px;font-size:6.705px;color:#323130;left:794.79px;transform:scaleX(0.88);transform-origin:left center;">2.9</div>
<div class="t" style="top:377.94px;font-size:7.097px;color:#323130;right:648.00px;text-align:right;transform:scaleX(0.93);transform-origin:right center;">Kelsie Miranda</div>
<div class="t" style="top:381.82px;font-size:6.705px;color:#323130;left:789.64px;transform:scaleX(0.88);transform-origin:left center;">2.8</div>
<div class="t" style="top:400.65px;font-size:7.097px;color:#323130;right:648.00px;text-align:right;transform:scaleX(0.93);transform-origin:right center;">Anton Chew</div>
<div class="t" style="top:398.18px;font-size:6.705px;color:#323130;left:797.89px;transform:scaleX(0.88);transform-origin:left center;">3.7</div>
<div class="t" style="top:404.53px;font-size:6.705px;color:#323130;left:820.57px;transform:scaleX(0.88);transform-origin:left center;">3.4</div>
<div class="t" style="top:423.37px;font-size:7.097px;color:#323130;right:648.00px;text-align:right;transform:scaleX(0.93);transform-origin:right center;">Tricia Potter</div>
<div class="t" style="top:420.90px;font-size:6.705px;color:#323130;left:806.14px;transform:scaleX(0.88);transform-origin:left center;">3.9</div>
<div class="t" style="top:427.25px;font-size:6.705px;color:#323130;left:825.72px;transform:scaleX(0.88);transform-origin:left center;">3.5</div>
<div class="t" style="top:446.08px;font-size:7.097px;color:#323130;right:648.00px;text-align:right;transform:scaleX(0.93);transform-origin:right center;">Dianna Lancaster</div>
<div class="t" style="top:449.96px;font-size:6.705px;color:#323130;left:815.41px;transform:scaleX(0.88);transform-origin:left center;">3.3</div>
<div class="t" style="top:214.87px;font-size:7.0px;color:#323130;left:441.80px;width:400px;text-align:center;">0.0</div>
<div class="t" style="top:474.87px;font-size:7.0px;color:#323130;left:441.80px;width:400px;text-align:center;">0.0</div>
<div class="t" style="top:214.87px;font-size:7.0px;color:#323130;left:483.20px;width:400px;text-align:center;">0.8</div>
<div class="t" style="top:474.87px;font-size:7.0px;color:#323130;left:483.20px;width:400px;text-align:center;">1.0</div>
<div class="t" style="top:214.87px;font-size:7.0px;color:#323130;left:524.40px;width:400px;text-align:center;">1.6</div>
<div class="t" style="top:474.87px;font-size:7.0px;color:#323130;left:524.40px;width:400px;text-align:center;">2.0</div>
<div class="t" style="top:214.87px;font-size:7.0px;color:#323130;left:565.90px;width:400px;text-align:center;">2.4</div>
<div class="t" style="top:474.87px;font-size:7.0px;color:#323130;left:565.90px;width:400px;text-align:center;">3.0</div>
<div class="t" style="top:214.87px;font-size:7.0px;color:#323130;left:607.20px;width:400px;text-align:center;">3.2</div>
<div class="t" style="top:474.87px;font-size:7.0px;color:#323130;left:607.20px;width:400px;text-align:center;">4.0</div>
<div class="t" style="top:214.87px;font-size:7.0px;color:#323130;left:645.00px;width:400px;text-align:center;">4.0</div>
<div class="t" style="top:474.87px;font-size:7.0px;color:#323130;left:645.00px;width:400px;text-align:center;">5.0</div>
<div class="t" style="top:200.71px;font-size:8.35px;color:#323130;left:549.30px;width:400px;text-align:center;transform:scaleX(0.9745);transform-origin:center center;-webkit-text-stroke:0.15px #323130;">Sum (Major GPA)</div>
<div class="t" style="top:489.71px;font-size:8.35px;color:#323130;left:549.30px;width:400px;text-align:center;transform:scaleX(0.958);transform-origin:center center;-webkit-text-stroke:0.15px #323130;">Sum (Term GPA)</div>
<div class="t" style="left:538.3px;top:343.6px;width:40px;text-align:center;font-size:8.3px;color:#323130;transform:rotate(-90deg);">Student</div>
<div class="t" style="top:129.10px;font-size:10.1px;color:#323130;left:906.30px;-webkit-text-stroke:0.3px #323130;">All Appointments</div>
<svg class="r" style="left:0px;top:0px;" width="1280" height="520" viewBox="0 0 1280 520"><path d="M989 127.8 L992 130.6 L995 127.8" fill="none" stroke="#323130" stroke-width="0.9"/><circle cx="1220.5" cy="124" r="0.75" fill="#323130"/><circle cx="1220.5" cy="127.6" r="0.75" fill="#323130"/><circle cx="1220.5" cy="131.2" r="0.75" fill="#323130"/><rect x="1091.5" y="149.5" width="143" height="23" fill="#fff" stroke="#dcdad8" stroke-width="1"/><circle cx="1223.4" cy="160.2" r="3.4" fill="none" stroke="#323130" stroke-width="1.05"/><line x1="1221" y1="162.6" x2="1217.2" y2="166.4" stroke="#323130" stroke-width="1.1"/><path d="M920.6 187.6 L923.2 190.4 L928 184.2" fill="none" stroke="#201f1e" stroke-width="1.3"/><line x1="931.5" y1="180" x2="931.5" y2="193.5" stroke="#d2d0ce" stroke-width="1"/><line x1="1103.7" y1="180" x2="1103.7" y2="193.5" stroke="#d2d0ce" stroke-width="1"/><line x1="1171.3" y1="180" x2="1171.3" y2="193.5" stroke="#d2d0ce" stroke-width="1"/><path d="M970.8 191 L970.8 183 M968.8 185 L970.8 183 L972.8 185" fill="none" stroke="#8a8886" stroke-width="0.9"/><path d="M982 184.8 L986 188.8 L990 184.8" fill="none" stroke="#605e5c" stroke-width="0.9"/><path d="M1150.2 184.8 L1154.1 188.8 L1158 184.8" fill="none" stroke="#605e5c" stroke-width="0.9"/><rect x="900" y="144" width="335" height="1" fill="#edebe9"/><rect x="900" y="199" width="335" height="2" fill="#edebe9"/><rect x="914" y="227.67" width="321" height="1" fill="#edebe9"/><rect x="914" y="255.34" width="321" height="1" fill="#edebe9"/><rect x="914" y="283.01" width="321" height="1" fill="#edebe9"/><rect x="914" y="310.68" width="321" height="1" fill="#edebe9"/><rect x="914" y="338.35" width="321" height="1" fill="#edebe9"/><rect x="914" y="366.02" width="321" height="1" fill="#edebe9"/><rect x="914" y="393.69" width="321" height="1" fill="#edebe9"/><rect x="914" y="421.36" width="321" height="1" fill="#edebe9"/><rect x="914" y="449.03" width="321" height="1" fill="#edebe9"/><rect x="905" y="471.3" width="134" height="3.8" rx="1.9" fill="#c8c8c8"/><rect x="900" y="479" width="335" height="1" fill="#edebe9"/><path d="M1132.4 489.8 L1132.4 498.2 M1140.4 494 L1134.6 494 M1137.4 491 L1134.4 494 L1137.4 497" fill="none" stroke="#605e5c" stroke-width="0.9"/><path d="M1159 494 L1150.2 494 M1153.4 490.8 L1150.2 494 L1153.4 497.2" fill="none" stroke="#605e5c" stroke-width="0.9"/><path d="M1212 494 L1220.6 494 M1217.4 490.8 L1220.6 494 L1217.4 497.2" fill="none" stroke="#1c64a8" stroke-width="0.9"/></svg>
<div class="t" style="top:161.73px;font-size:10px;color:#8a8886;left:1096.30px;transform:scaleX(0.9326);transform-origin:left center;">Search this view</div>
<div class="t" style="top:187.02px;font-size:8.6px;color:#605e5c;left:936.50px;transform:scaleX(0.9238);transform-origin:left center;">Subject</div>
<div class="t" style="top:187.02px;font-size:8.6px;color:#605e5c;left:1108.70px;transform:scaleX(0.945);transform-origin:left center;">Regarding</div>
<div class="r" style="left:1177px;top:170px;width:58px;height:30px;overflow:hidden;">
<div class="t" style="top:16.69px;font-size:9.556px;color:#605e5c;left:0.50px;transform:scaleX(0.9);transform-origin:left center;">Required Attendees</div>
</div>
<div class="r" style="left:936px;top:200.00px;width:167.5px;height:27px;overflow:hidden;">
<div class="t" style="top:15.83px;font-size:10.0px;color:#1c64a8;left:0.50px;transform:scaleX(0.9419);transform-origin:left center;">Cover Letter Help Requested</div>
</div>
<div class="r" style="left:1108px;top:200.00px;width:64px;height:27px;overflow:hidden;">
<div class="t" style="top:15.83px;font-size:10.0px;color:#1c64a8;left:0.70px;transform:scaleX(0.9479);transform-origin:left center;">Bert Hair</div>
</div>
<div class="r" style="left:1177px;top:200.00px;width:58px;height:27px;overflow:hidden;">
<div class="t" style="top:15.83px;font-size:10.0px;color:#323130;left:0.50px;transform:scaleX(0.9479);transform-origin:left center;">Bert Hair</div>
</div>
<div class="r" style="left:936px;top:227.67px;width:167.5px;height:27px;overflow:hidden;">
<div class="t" style="top:15.83px;font-size:10.0px;color:#1c64a8;left:0.50px;transform:scaleX(0.9261);transform-origin:left center;">Discuss Plan for Economics 301</div>
</div>
<div class="r" style="left:1108px;top:227.67px;width:64px;height:27px;overflow:hidden;">
<div class="t" style="top:15.83px;font-size:10.0px;color:#1c64a8;left:0.70px;transform:scaleX(0.9508);transform-origin:left center;">Anton Chew</div>
</div>
<div class="r" style="left:1177px;top:227.67px;width:58px;height:27px;overflow:hidden;">
<div class="t" style="top:15.83px;font-size:10.0px;color:#323130;letter-spacing:1.0px;left:0.50px;">---</div>
</div>
<div class="r" style="left:936px;top:255.34px;width:167.5px;height:27px;overflow:hidden;">
<div class="t" style="top:15.83px;font-size:10.0px;color:#1c64a8;left:0.50px;transform:scaleX(0.9376);transform-origin:left center;">Discuss plan for English 101</div>
</div>
<div class="r" style="left:1108px;top:255.34px;width:64px;height:27px;overflow:hidden;">
<div class="t" style="top:15.83px;font-size:10.0px;color:#1c64a8;left:0.70px;transform:scaleX(0.9508);transform-origin:left center;">Anton Chew</div>
</div>
<div class="r" style="left:1177px;top:255.34px;width:58px;height:27px;overflow:hidden;">
<div class="t" style="top:15.83px;font-size:10.0px;color:#323130;left:0.50px;transform:scaleX(0.9508);transform-origin:left center;">Anton Chew</div>
</div>
<div class="r" style="left:936px;top:283.01px;width:167.5px;height:27px;overflow:hidden;">
<div class="t" style="top:15.83px;font-size:10.0px;color:#1c64a8;left:0.50px;transform:scaleX(0.9553);transform-origin:left center;">Let&#x27;s talk</div>
</div>
<div class="r" style="left:1108px;top:283.01px;width:64px;height:27px;overflow:hidden;">
<div class="t" style="top:15.83px;font-size:10.0px;color:#1c64a8;left:0.70px;transform:scaleX(0.9508);transform-origin:left center;">Anton Chew</div>
</div>
<div class="r" style="left:1177px;top:283.01px;width:58px;height:27px;overflow:hidden;">
<div class="t" style="top:15.83px;font-size:10.0px;color:#323130;letter-spacing:1.0px;left:0.50px;">---</div>
</div>
<div class="r" style="left:936px;top:310.68px;width:167.5px;height:27px;overflow:hidden;">
<div class="t" style="top:15.83px;font-size:10.0px;color:#1c64a8;left:0.50px;transform:scaleX(0.961);transform-origin:left center;">Need a tutor for CS coursework</div>
</div>
<div class="r" style="left:1108px;top:310.68px;width:64px;height:27px;overflow:hidden;">
<div class="t" style="top:15.83px;font-size:10.0px;color:#1c64a8;left:0.70px;transform:scaleX(0.8906);transform-origin:left center;">Clare Casey</div>
</div>
<div class="r" style="left:1177px;top:310.68px;width:58px;height:27px;overflow:hidden;">
<div class="t" style="top:15.83px;font-size:10.0px;color:#323130;left:0.50px;transform:scaleX(0.8906);transform-origin:left center;">Clare Casey</div>
</div>
<div class="r" style="left:936px;top:338.35px;width:167.5px;height:27px;overflow:hidden;">
<div class="t" style="top:15.83px;font-size:10.0px;color:#1c64a8;left:0.50px;transform:scaleX(0.9903);transform-origin:left center;">Need help with applying for a job for the summer</div>
</div>
<div class="r" style="left:1108px;top:338.35px;width:64px;height:27px;overflow:hidden;">
<div class="t" style="top:15.83px;font-size:10.0px;color:#1c64a8;left:0.70px;transform:scaleX(0.9508);transform-origin:left center;">Anton Chew</div>
</div>
<div class="r" style="left:1177px;top:338.35px;width:58px;height:27px;overflow:hidden;">
<div class="t" style="top:15.83px;font-size:10.0px;color:#323130;letter-spacing:1.0px;left:0.50px;">---</div>
</div>
<div class="r" style="left:936px;top:366.02px;width:167.5px;height:27px;overflow:hidden;">
<div class="t" style="top:15.83px;font-size:10.0px;color:#1c64a8;left:0.50px;transform:scaleX(0.9903);transform-origin:left center;">Need help with applying for a job for the summer</div>
</div>
<div class="r" style="left:1108px;top:366.02px;width:64px;height:27px;overflow:hidden;">
<div class="t" style="top:15.83px;font-size:10.0px;color:#1c64a8;left:0.70px;transform:scaleX(0.9508);transform-origin:left center;">Anton Chew</div>
</div>
<div class="r" style="left:1177px;top:366.02px;width:58px;height:27px;overflow:hidden;">
<div class="t" style="top:15.83px;font-size:10.0px;color:#323130;letter-spacing:1.0px;left:0.50px;">---</div>
</div>
<div class="r" style="left:936px;top:393.69px;width:167.5px;height:27px;overflow:hidden;">
<div class="t" style="top:15.83px;font-size:10.0px;color:#1c64a8;left:0.50px;transform:scaleX(0.9903);transform-origin:left center;">Need help with applying for a job for the summer</div>
</div>
<div class="r" style="left:1108px;top:393.69px;width:64px;height:27px;overflow:hidden;">
<div class="t" style="top:15.83px;font-size:10.0px;color:#1c64a8;left:0.70px;transform:scaleX(0.9508);transform-origin:left center;">Anton Chew</div>
</div>
<div class="r" style="left:1177px;top:393.69px;width:58px;height:27px;overflow:hidden;">
<div class="t" style="top:15.83px;font-size:10.0px;color:#323130;letter-spacing:1.0px;left:0.50px;">---</div>
</div>
<div class="r" style="left:936px;top:421.36px;width:167.5px;height:27px;overflow:hidden;">
<div class="t" style="top:15.83px;font-size:10.0px;color:#1c64a8;left:0.50px;transform:scaleX(0.9706);transform-origin:left center;">Need placement for nursing practicum.</div>
</div>
<div class="r" style="left:1108px;top:421.36px;width:64px;height:27px;overflow:hidden;">
<div class="t" style="top:15.83px;font-size:10.0px;color:#1c64a8;left:0.70px;transform:scaleX(0.9387);transform-origin:left center;">Helena Wilcox.</div>
</div>
<div class="r" style="left:1177px;top:421.36px;width:58px;height:27px;overflow:hidden;">
<div class="t" style="top:15.83px;font-size:10.0px;color:#323130;left:0.50px;transform:scaleX(0.9075);transform-origin:left center;">Helena Wilcox</div>
</div>
<div class="t" style="top:494.29px;font-size:9.556px;color:#1c64a8;left:910.60px;transform:scaleX(0.9);transform-origin:left center;">ABC</div>
<div class="t" style="top:494.43px;font-size:9.721px;color:#323130;left:947.80px;transform:scaleX(0.86);transform-origin:left center;">1 - 9 of 11</div>
<div class="t" style="top:494.67px;font-size:9.024px;color:#323130;left:1173.60px;transform:scaleX(0.82);transform-origin:left center;">Page 1</div>
<svg class="r" style="left:0px;top:0px;" width="1280" height="720" viewBox="0 0 1280 720"><line x1="891" y1="534" x2="901" y2="534" stroke="#323130" stroke-width="1"/><line x1="896" y1="529" x2="896" y2="539" stroke="#323130" stroke-width="1"/><path d="M950.4 530.2 L958.4 530.2 M952.8 530.2 L952.8 528.6 L956 528.6 L956 530.2 M951.4 530.2 L952 539 L956.8 539 L957.4 530.2 M953.4 532 L953.4 537.4 M955.4 532 L955.4 537.4" fill="none" stroke="#323130" stroke-width="0.9"/><line x1="1008.6" y1="527" x2="1008.6" y2="541" stroke="#8a8886" stroke-width="1"/><path d="M1013.6 531.8 L1018.6 536.6 L1023.6 531.8" fill="none" stroke="#323130" stroke-width="1"/><path d="M1043.6 529.6 A5.2 5.2 0 1 0 1046.8 528.8" fill="none" stroke="#323130" stroke-width="1"/><path d="M1042 528.4 L1044.2 529.6 L1043 531.8" fill="none" stroke="#323130" stroke-width="0.9"/><path d="M1113.2 529 L1122.4 529 L1122.4 538.6 L1113.2 538.6 Z M1113.2 532 L1122.4 532 M1113.2 535 L1122.4 535 M1116.4 529 L1116.4 538.6 M1119.4 529 L1119.4 538.6" fill="none" stroke="#323130" stroke-width="0.85"/><rect x="1121" y="535.5" width="3.5" height="3.5" fill="#fff" stroke="#323130" stroke-width="0.8"/><circle cx="1220.5" cy="530.4" r="0.75" fill="#323130"/><circle cx="1220.5" cy="534" r="0.75" fill="#323130"/><circle cx="1220.5" cy="537.6" r="0.75" fill="#323130"/><rect x="171" y="549" width="1064" height="1" fill="#edebe9"/><rect x="1091.5" y="554.5" width="143" height="23" fill="#fff" stroke="#dcdad8" stroke-width="1"/><circle cx="1223.4" cy="565.2" r="3.4" fill="none" stroke="#323130" stroke-width="1.05"/><line x1="1221" y1="567.6" x2="1217.2" y2="571.4" stroke="#323130" stroke-width="1.1"/><path d="M191.4 592.6 L194 595.4 L198.8 589.2" fill="none" stroke="#201f1e" stroke-width="1.3"/><line x1="201.9" y1="585.2" x2="201.9" y2="598.8" stroke="#d2d0ce" stroke-width="1"/><line x1="362.4" y1="585.2" x2="362.4" y2="598.8" stroke="#d2d0ce" stroke-width="1"/><line x1="489.6" y1="585.2" x2="489.6" y2="598.8" stroke="#d2d0ce" stroke-width="1"/><line x1="581.2" y1="585.2" x2="581.2" y2="598.8" stroke="#d2d0ce" stroke-width="1"/><line x1="673.4" y1="585.2" x2="673.4" y2="598.8" stroke="#d2d0ce" stroke-width="1"/><line x1="834.7" y1="585.2" x2="834.7" y2="598.8" stroke="#d2d0ce" stroke-width="1"/><line x1="995.6" y1="585.2" x2="995.6" y2="598.8" stroke="#d2d0ce" stroke-width="1"/><line x1="1087.5" y1="585.2" x2="1087.5" y2="598.8" stroke="#d2d0ce" stroke-width="1"/><line x1="1213.8" y1="585.2" x2="1213.8" y2="598.8" stroke="#d2d0ce" stroke-width="1"/><path d="M251 596 L251 588 M249 590 L251 588 L253 590" fill="none" stroke="#8a8886" stroke-width="0.9"/><rect x="171" y="604.4" width="1043" height="2" fill="#edebe9"/><rect x="184.7" y="632.5" width="1029.3" height="1" fill="#f0efee"/><rect x="184.7" y="660.1" width="1029.3" height="1" fill="#f0efee"/><rect x="184.7" y="687.7" width="1029.3" height="1" fill="#f0efee"/><rect x="184.7" y="715.3" width="1029.3" height="1" fill="#f0efee"/><path d="M262.6 590.6 L266.6 594.6 L270.6 590.6" fill="none" stroke="#605e5c" stroke-width="0.9"/><path d="M391.5 590.6 L395.5 594.6 L399.5 590.6" fill="none" stroke="#605e5c" stroke-width="0.9"/><path d="M556.7 590.6 L560.7 594.6 L564.7 590.6" fill="none" stroke="#605e5c" stroke-width="0.9"/><path d="M661.9 590.6 L665.9 594.6 L669.9 590.6" fill="none" stroke="#605e5c" stroke-width="0.9"/><path d="M743 590.6 L747 594.6 L751 590.6" fill="none" stroke="#605e5c" stroke-width="0.9"/><path d="M925 590.6 L929 594.6 L933 590.6" fill="none" stroke="#605e5c" stroke-width="0.9"/><path d="M1057.6 590.6 L1061.6 594.6 L1065.6 590.6" fill="none" stroke="#605e5c" stroke-width="0.9"/><path d="M1187.4 590.6 L1191.4 594.6 L1195.4 590.6" fill="none" stroke="#605e5c" stroke-width="0.9"/></svg>
<div class="t" style="top:534.63px;font-size:10px;color:#323130;left:911.20px;transform:scaleX(0.9997);transform-origin:left center;">New</div>
<div class="t" style="top:534.63px;font-size:10px;color:#323130;left:971.00px;transform:scaleX(0.9513);transform-origin:left center;">Delete</div>
<div class="t" style="top:534.63px;font-size:10px;color:#323130;left:1062.70px;transform:scaleX(0.9082);transform-origin:left center;">Refresh</div>
<div class="t" style="top:534.63px;font-size:10px;color:#323130;left:1134.30px;transform:scaleX(0.9325);transform-origin:left center;">See all records</div>
<div class="t" style="top:566.73px;font-size:10px;color:#8a8886;left:1096.30px;transform:scaleX(0.9326);transform-origin:left center;">Search this view</div>
<div class="t" style="top:592.02px;font-size:8.6px;color:#605e5c;left:206.80px;transform:scaleX(0.9429);transform-origin:left center;">Full Name</div>
<div class="t" style="top:592.02px;font-size:8.6px;color:#605e5c;left:367.90px;transform:scaleX(0.8882);transform-origin:left center;">Email</div>
<div class="t" style="top:592.02px;font-size:8.6px;color:#605e5c;left:494.50px;transform:scaleX(0.9395);transform-origin:left center;">Graduation Year</div>
<div class="t" style="top:592.02px;font-size:8.6px;color:#605e5c;left:586.20px;transform:scaleX(0.9483);transform-origin:left center;">Current Program ...</div>
<div class="t" style="top:592.02px;font-size:8.6px;color:#605e5c;left:678.00px;transform:scaleX(0.9571);transform-origin:left center;">Current Program</div>
<div class="t" style="top:592.02px;font-size:8.6px;color:#605e5c;left:839.60px;transform:scaleX(0.9368);transform-origin:left center;">Current Program Level</div>
<div class="t" style="top:592.02px;font-size:8.6px;color:#605e5c;left:1000.50px;transform:scaleX(0.9235);transform-origin:left center;">Student Status</div>
<div class="t" style="top:592.02px;font-size:8.6px;color:#605e5c;left:1092.40px;transform:scaleX(0.9466);transform-origin:left center;">Current Academic Period</div>
<div class="t" style="top:621.03px;font-size:10.0px;color:#1c64a8;left:206.80px;transform:scaleX(0.9637);transform-origin:left center;">Anton Chew</div>
<div class="r" style="left:367px;top:609.50px;width:121px;height:22px;overflow:hidden;">
<div class="t" style="top:11.53px;font-size:10.0px;color:#1c64a8;left:0.90px;transform:scaleX(0.9561);transform-origin:left center;">anton.chew@contoso.edu</div>
</div>
<div class="t" style="top:621.03px;font-size:10.0px;color:#323130;left:494.50px;transform:scaleX(1.0024);transform-origin:left center;">2024</div>
<div class="t" style="top:621.03px;font-size:10.0px;color:#323130;right:613.80px;text-align:right;transform:scaleX(0.971);transform-origin:right center;">25.00</div>
<div class="r" style="left:677px;top:609.50px;width:156.5px;height:22px;overflow:hidden;">
<div class="t" style="top:11.53px;font-size:10.0px;color:#1c64a8;left:1.00px;transform:scaleX(0.9617);transform-origin:left center;">Accounting - Bachelors</div>
</div>
<div class="t" style="top:621.03px;font-size:10.0px;color:#1c64a8;left:839.60px;transform:scaleX(0.9229);transform-origin:left center;">Bachelors of Science</div>
<div class="t" style="top:621.03px;font-size:10.0px;color:#1c64a8;left:1000.80px;transform:scaleX(0.9474);transform-origin:left center;">Active</div>
<div class="t" style="top:621.03px;font-size:10.0px;color:#1c64a8;left:1092.20px;transform:scaleX(0.914);transform-origin:left center;">Fall 2020</div>
<div class="t" style="top:648.68px;font-size:10.0px;color:#1c64a8;left:206.80px;transform:scaleX(0.9505);transform-origin:left center;">Bert Hair</div>
<div class="r" style="left:367px;top:637.15px;width:121px;height:22px;overflow:hidden;">
<div class="t" style="top:11.53px;font-size:10.0px;color:#1c64a8;left:0.90px;transform:scaleX(0.9603);transform-origin:left center;">bert.hair@contoso.edu</div>
</div>
<div class="t" style="top:648.68px;font-size:10.0px;color:#323130;left:494.50px;transform:scaleX(1.0024);transform-origin:left center;">2024</div>
<div class="t" style="top:648.68px;font-size:10.0px;color:#323130;right:613.80px;text-align:right;transform:scaleX(0.971);transform-origin:right center;">20.00</div>
<div class="r" style="left:677px;top:637.15px;width:156.5px;height:22px;overflow:hidden;">
<div class="t" style="top:11.53px;font-size:10.0px;color:#1c64a8;left:1.00px;transform:scaleX(0.9507);transform-origin:left center;">Fashion &amp; Retail Management - Bachelors</div>
</div>
<div class="t" style="top:648.68px;font-size:10.0px;color:#1c64a8;left:839.60px;transform:scaleX(0.9229);transform-origin:left center;">Bachelors of Science</div>
<div class="t" style="top:648.68px;font-size:10.0px;color:#1c64a8;left:1000.80px;transform:scaleX(0.9474);transform-origin:left center;">Active</div>
<div class="t" style="top:648.68px;font-size:10.0px;color:#1c64a8;left:1092.20px;transform:scaleX(0.914);transform-origin:left center;">Fall 2020</div>
<div class="t" style="top:676.33px;font-size:10.0px;color:#1c64a8;left:206.80px;transform:scaleX(0.8942);transform-origin:left center;">Clare Casey</div>
<div class="r" style="left:367px;top:664.80px;width:121px;height:22px;overflow:hidden;">
<div class="t" style="top:11.53px;font-size:10.0px;color:#1c64a8;left:0.90px;transform:scaleX(0.933);transform-origin:left center;">clare.casey@contoso.edu</div>
</div>
<div class="t" style="top:676.33px;font-size:10.0px;color:#323130;left:494.50px;transform:scaleX(1.0024);transform-origin:left center;">2025</div>
<div class="t" style="top:676.33px;font-size:10.0px;color:#323130;right:613.80px;text-align:right;transform:scaleX(0.971);transform-origin:right center;">33.00</div>
<div class="r" style="left:677px;top:664.80px;width:156.5px;height:22px;overflow:hidden;">
<div class="t" style="top:11.53px;font-size:10.0px;color:#1c64a8;left:1.00px;transform:scaleX(0.9401);transform-origin:left center;">Computer Science - Bachelors</div>
</div>
<div class="t" style="top:676.33px;font-size:10.0px;color:#1c64a8;left:839.60px;transform:scaleX(0.9229);transform-origin:left center;">Bachelors of Science</div>
<div class="t" style="top:676.33px;font-size:10.0px;color:#1c64a8;left:1000.80px;transform:scaleX(0.9474);transform-origin:left center;">Active</div>
<div class="t" style="top:676.33px;font-size:10.0px;color:#1c64a8;left:1092.20px;transform:scaleX(0.914);transform-origin:left center;">Fall 2020</div>
<div class="t" style="top:703.98px;font-size:10.0px;color:#1c64a8;left:206.80px;transform:scaleX(0.9497);transform-origin:left center;">Helena Wilcox</div>
<div class="r" style="left:367px;top:692.45px;width:121px;height:22px;overflow:hidden;">
<div class="t" style="top:11.53px;font-size:10.0px;color:#1c64a8;left:0.90px;transform:scaleX(0.9462);transform-origin:left center;">helena.wilcox@contoso.edu.</div>
</div>
<div class="t" style="top:703.98px;font-size:10.0px;color:#323130;left:494.50px;transform:scaleX(1.0024);transform-origin:left center;">2025</div>
<div class="t" style="top:703.98px;font-size:10.0px;color:#323130;right:613.80px;text-align:right;transform:scaleX(0.971);transform-origin:right center;">15.00</div>
<div class="r" style="left:677px;top:692.45px;width:156.5px;height:22px;overflow:hidden;">
<div class="t" style="top:11.53px;font-size:10.0px;color:#1c64a8;left:1.00px;transform:scaleX(0.9563);transform-origin:left center;">Nursing - Bachelor</div>
</div>
<div class="t" style="top:703.98px;font-size:10.0px;color:#1c64a8;left:839.60px;transform:scaleX(0.9229);transform-origin:left center;">Bachelors of Science</div>
<div class="t" style="top:703.98px;font-size:10.0px;color:#1c64a8;left:1000.80px;transform:scaleX(0.9474);transform-origin:left center;">Active</div>
<div class="t" style="top:703.98px;font-size:10.0px;color:#1c64a8;left:1092.20px;transform:scaleX(0.914);transform-origin:left center;">Fall 2020</div>
</body></html>
